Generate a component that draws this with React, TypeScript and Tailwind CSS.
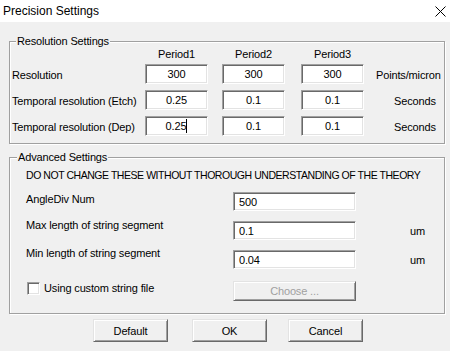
import React from "react";

const sunken =
  "bg-white border border-t-[#a0a0a0] border-l-[#a0a0a0] border-b-white border-r-white shadow-[inset_1px_1px_0_#696969,inset_-1px_-1px_0_#e3e3e3]";
const raised =
  "bg-[#f0f0f0] border border-t-[#e3e3e3] border-l-[#e3e3e3] border-b-[#696969] border-r-[#696969] shadow-[inset_1px_1px_0_#ffffff,inset_-1px_-1px_0_#a0a0a0]";
const group =
  "relative ml-[9px] w-[436px] border border-[#a0a0a0] shadow-[inset_1px_1px_0_#ffffff,1px_1px_0_#ffffff]";

function Cell({ value, caret }: { value: string; caret?: boolean }) {
  return (
    <div className={`${sunken} w-[63px] h-[20px] flex items-center justify-center leading-[14px]`}>
      <span>{value}</span>
      {caret && <span className="inline-block w-px h-[14px] bg-black" />}
    </div>
  );
}

function Row({
  label,
  values,
  unit,
  unitClass,
  caret,
}: {
  label: string;
  values: string[];
  unit: string;
  unitClass: string;
  caret?: boolean;
}) {
  return (
    <div className="flex items-center h-[20px]">
      <div className="w-[133px] pt-[2px] leading-[14px]">{label}</div>
      <Cell value={values[0]} caret={caret} />
      <div className="ml-[14px]">
        <Cell value={values[1]} />
      </div>
      <div className="ml-[16px]">
        <Cell value={values[2]} />
      </div>
      <div className={`${unitClass} pt-[2px] leading-[14px]`}>{unit}</div>
    </div>
  );
}

function Field({ value }: { value: string }) {
  return (
    <div className={`${sunken} w-[123px] h-[19px] flex items-center pl-[5px] leading-[14px]`}>
      {value}
    </div>
  );
}

export default function App() {
  return (
    <div className="w-[450px] h-[351px] bg-[#f0f0f0] overflow-hidden text-[11px] tracking-[-0.15px] text-black font-['Liberation_Sans',Arial,sans-serif]">
      {/* title bar */}
      <div className="h-[22px] bg-white flex items-center justify-between pl-[3px] pr-[4px] tracking-normal">
        <span className="text-[12px] leading-[16px]">Precision Settings</span>
        <svg width="11" height="11" viewBox="0 0 11 11" className="mt-[1px]">
          <path d="M0.5 0.5 L10.5 10.5 M10.5 0.5 L0.5 10.5" stroke="#000" strokeWidth="1" />
        </svg>
      </div>

      {/* Resolution Settings */}
      <div className={`${group} mt-[19px] h-[103px] pl-[2px]`}>
        <span className="absolute left-[6px] -top-[8px] bg-[#f0f0f0] px-px leading-[14px]">
          Resolution Settings
        </span>
        <div className="flex pt-[5px] h-[19px] leading-[14px]">
          <div className="w-[133px]" />
          <div className="w-[63px] text-center">Period1</div>
          <div className="w-[63px] ml-[14px] text-center">Period2</div>
          <div className="w-[63px] ml-[16px] text-center">Period3</div>
        </div>
        <div className="mt-[3px] flex flex-col gap-[6px]">
          <Row label="Resolution" values={["300", "300", "300"]} unit="Points/micron" unitClass="ml-[12px]" />
          <Row label="Temporal resolution (Etch)" values={["0.25", "0.1", "0.1"]} unit="Seconds" unitClass="ml-[30px]" />
          <Row label="Temporal resolution (Dep)" values={["0.25", "0.1", "0.1"]} unit="Seconds" unitClass="ml-[30px]" caret />
        </div>
      </div>

      {/* Advanced Settings */}
      <div className={`${group} mt-[13px] h-[157px] pl-[16px] pt-[10px]`}>
        <span className="absolute left-[7px] -top-[8px] bg-[#f0f0f0] px-px leading-[14px]">
          Advanced Settings
        </span>
        <div className="leading-[14px] h-[14px] whitespace-nowrap text-[10.5px] tracking-[-0.45px]">
          DO NOT CHANGE THESE WITHOUT THOROUGH UNDERSTANDING OF THE THEORY
        </div>
        <div className="mt-[10px] flex items-start h-[19px]">
          <div className="w-[207px] leading-[14px]">AngleDiv Num</div>
          <Field value="500" />
        </div>
        <div className="mt-[10px] flex items-start h-[19px]">
          <div className="w-[207px] leading-[14px] -mt-[3px]">Max length of string segment</div>
          <Field value="0.1" />
          <div className="ml-[54px] self-center leading-[14px] pt-[1px]">um</div>
        </div>
        <div className="mt-[10px] flex items-start h-[19px]">
          <div className="w-[207px] leading-[14px] -mt-[4px]">Min length of string segment</div>
          <Field value="0.04" />
          <div className="ml-[54px] self-center leading-[14px] pt-[1px]">um</div>
        </div>
        <div className="mt-[12px] flex items-start h-[20px]">
          <div className="w-[207px] flex items-start">
            <div className={`${sunken} ml-[1px] mt-[1px] w-[13px] h-[13px]`} />
            <span className="ml-[4px] leading-[14px]">Using custom string file</span>
          </div>
          <div className={`${raised} w-[123px] h-[20px] flex items-center justify-center text-[#a0a0a0] leading-[14px]`}>
            Choose ...
          </div>
        </div>
      </div>

      {/* buttons */}
      <div className="mt-[5px] ml-[93px] flex">
        <div className={`${raised} w-[75px] h-[23px] flex items-center justify-center leading-[14px]`}>Default</div>
        <div className={`${raised} ml-[24px] w-[75px] h-[23px] flex items-center justify-center leading-[14px]`}>OK</div>
        <div className={`${raised} ml-[21px] w-[75px] h-[23px] flex items-center justify-center leading-[14px]`}>Cancel</div>
      </div>
    </div>
  );
}
